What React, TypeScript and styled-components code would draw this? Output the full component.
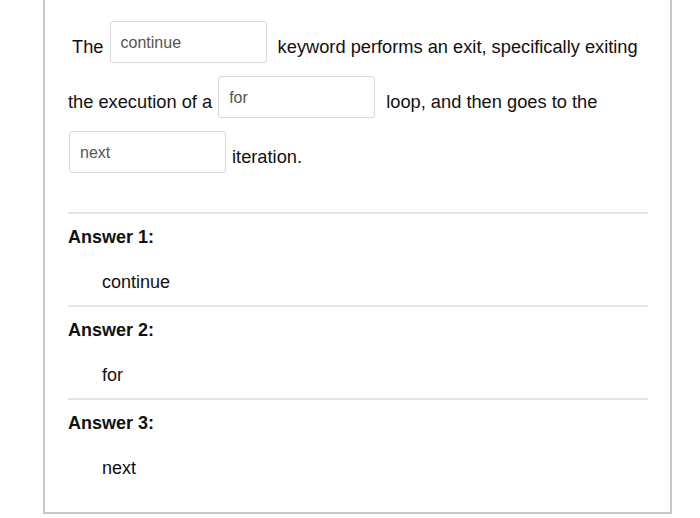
import React from "react";
import styled, { createGlobalStyle } from "styled-components";

const Global = createGlobalStyle`
  html, body {
    margin: 0;
    padding: 0;
    background: #ffffff;
  }
  body {
    font-family: "Liberation Sans", Arial, sans-serif;
    color: #111111;
  }
`;

const Card = styled.div`
  box-sizing: border-box;
  margin-left: 43px;
  width: 629px;
  border: 2px solid #c8c8c8;
  border-top: none;
  padding: 0 22px 21px 23px;
  background: #ffffff;
`;

const Sentence = styled.p`
  margin: 0;
  padding-top: 19px;
  font-size: 18.25px;
  line-height: 55px;
  text-indent: 4px;
`;

const Blank = styled.input`
  box-sizing: border-box;
  width: 157px;
  height: 42px;
  margin: 0 6px 0 1px;
  padding: 3px 10px 0;
  border: 1px solid #d8d8d8;
  border-radius: 3px;
  background: #ffffff;
  font-family: "Liberation Sans", Arial, sans-serif;
  font-size: 16px;
  color: #555555;
  text-indent: 0;
  vertical-align: 5px;
  outline: none;
`;

const Answers = styled.div`
  margin-top: 28px;
`;

const AnswerBlock = styled.section`
  border-top: 2px solid #e6e6e6;
  padding: 10px 0;
`;

const AnswerLabel = styled.div`
  font-size: 18px;
  font-weight: bold;
  line-height: 26px;
`;

const AnswerValue = styled.div`
  margin-top: 19px;
  padding-left: 34px;
  font-size: 18px;
  line-height: 26px;
`;

const answers = ["continue", "for", "next"];

export default function App() {
  return (
    <>
      <Global />
      <Card>
        <Sentence>
          The <Blank readOnly value="continue" /> keyword performs an exit,
          specifically exiting the execution of a{" "}
          <Blank readOnly value="for" /> loop, and then goes to the{" "}
          <Blank readOnly value="next" />iteration.
        </Sentence>
        <Answers>
          {answers.map((a, i) => (
            <AnswerBlock key={i}>
              <AnswerLabel>Answer {i + 1}:</AnswerLabel>
              <AnswerValue>{a}</AnswerValue>
            </AnswerBlock>
          ))}
        </Answers>
      </Card>
    </>
  );
}
